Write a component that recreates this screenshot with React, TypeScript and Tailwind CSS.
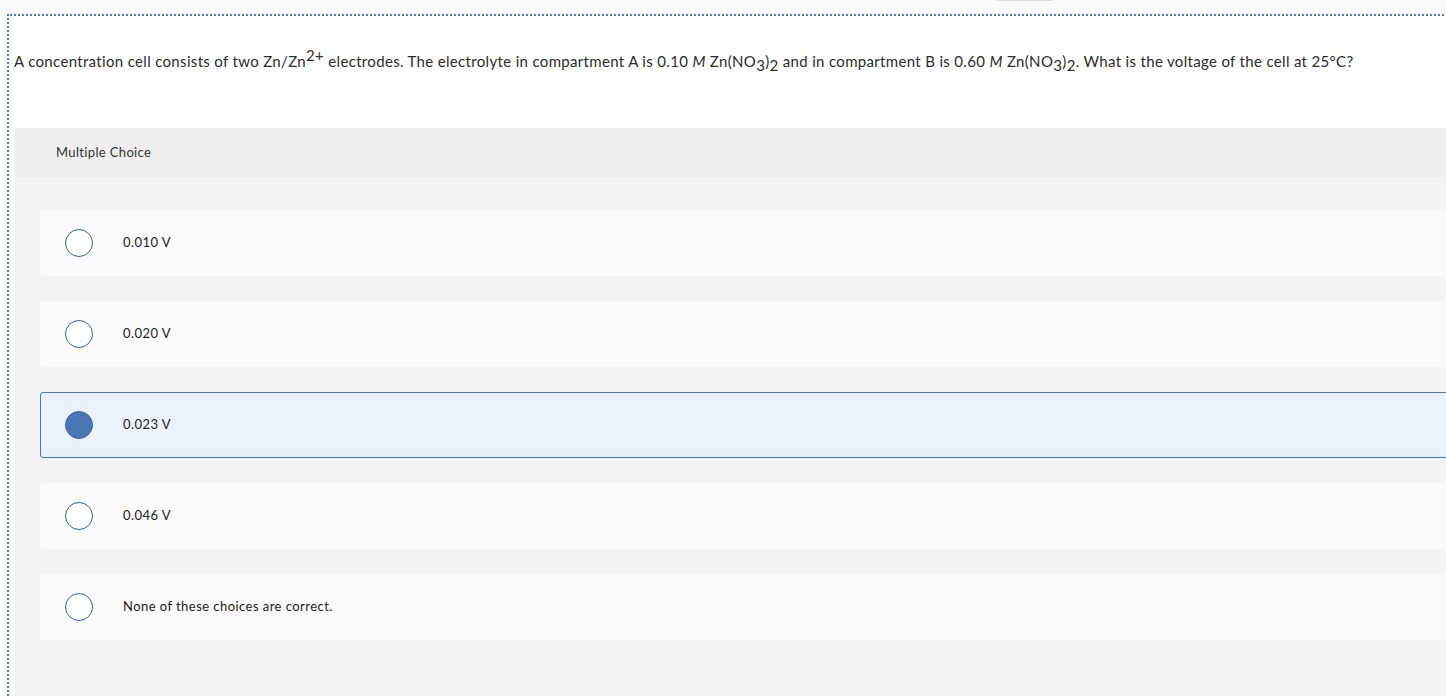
const CHOICES = ["0.010 V", "0.020 V", "0.023 V", "0.046 V", "None of these choices are correct."];
const SELECTED = 2;

function Radio({ checked }: { checked: boolean }) {
  return (
    <span
      className={
        checked
          ? "block size-[28px] shrink-0 rounded-full border border-[#3d67a3] bg-[#4a76b5]"
          : "block size-[28px] shrink-0 rounded-full border-[1.5px] border-[#3f5f8c] bg-white"
      }
    />
  );
}

function Choice({ label, checked }: { label: string; checked: boolean }) {
  return (
    <div
      className={
        checked
          ? "flex h-[66px] items-center gap-[30px] rounded-[3px] border border-[#4a76b5] bg-[#ebf2fb] pl-[24px]"
          : "flex h-[66px] items-center gap-[30px] rounded-[3px] border border-transparent bg-[#fafafa] pl-[24px]"
      }
    >
      <Radio checked={checked} />
      <span className="text-[13px] tracking-[0.45px] text-[#222]">{label}</span>
    </div>
  );
}

const Sup = ({ children }: { children: string }) => <span className="align-[6px] leading-none">{children}</span>;
const Sub = ({ children }: { children: string }) => <span className="align-[-4px] leading-none">{children}</span>;

export default function App() {
  return (
    <div
      className="h-[698px] w-full overflow-hidden bg-white"
      style={{ fontFamily: "Lato, 'Open Sans', sans-serif" }}
    >
      <div className="w-[1500px]">
        <div className="relative h-[14px] bg-[#fafafa]">
          <div className="absolute left-[997px] top-0 h-[1px] w-[56px] rounded-b bg-[#e2e2e2]" />
        </div>
        <div className="ml-[7px] border-l-2 border-t-2 border-dotted border-[#4a7abf] pl-[5px]">
          <p className="pt-[32px] text-[15px] leading-[20px] tracking-[0.33px] text-[#2b2b2b]">
            A concentration cell consists of two Zn/Zn<Sup>2+</Sup> electrodes. The electrolyte in compartment A is
            0.10 <i>M</i> Zn(NO<Sub>3</Sub>)<Sub>2</Sub> and in compartment B is 0.60 <i>M</i> Zn(NO<Sub>3</Sub>)
            <Sub>2</Sub>. What is the voltage of the cell at 25°C?
          </p>

          <div className="mt-[55px] overflow-hidden rounded-[3px] bg-[#f4f4f4]">
            <div className="flex h-[49px] items-center bg-[#efefef] pl-[42px] pt-[1px] text-[13px] tracking-[0.35px] text-[#333]">
              Multiple Choice
            </div>
            <div className="flex flex-col gap-[25px] pb-[56px] pl-[26px] pt-[33px]">
              {CHOICES.map((c, i) => (
                <Choice key={c} label={c} checked={i === SELECTED} />
              ))}
            </div>
          </div>
        </div>
      </div>
    </div>
  );
}
